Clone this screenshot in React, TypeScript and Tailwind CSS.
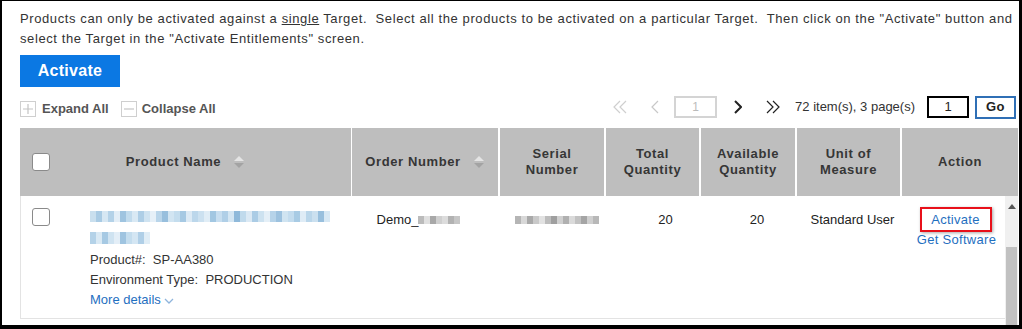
import React from "react";

const font = { fontFamily: '"Liberation Sans", Arial, sans-serif' };

const blueBlur = [
  "#c9dfee", "#a9cbe4", "#d6e7f3", "#b4d2e8", "#e3eef7", "#9fc4e0", "#c1dbed", "#d9e9f4",
  "#aecee6", "#cfe3f1", "#e6f0f8", "#b9d5ea", "#98bfdd", "#d2e5f2", "#c4ddee", "#a6c9e3",
  "#dceaf5", "#bcd7eb", "#cce1f0", "#e0edf6", "#a2c7e2", "#c7def0", "#b0cfe7", "#d4e6f3",
  "#8fb9da", "#c0daec", "#dbe9f4", "#abcce5", "#cde2f0", "#e4eff7", "#b6d3e9", "#9dc2df",
  "#d0e4f1", "#c3dcee", "#a8cbe4", "#dfecf6", "#bad6ea", "#cbe0ef", "#98bfdd", "#d7e8f4",
];
const blueBlur2 = ["#b4d2e8", "#d9e9f4", "#a6c9e3", "#cfe3f1", "#e3eef7", "#9fc4e0", "#c4ddee", "#d4e6f3", "#b0cfe7", "#e0edf6"];
const grayBlur = ["#b5b5b5", "#d8d8d8", "#a9a9a9", "#c9c9c9", "#e2e2e2", "#bdbdbd", "#9f9f9f", "#d0d0d0", "#b0b0b0", "#dadada", "#c2c2c2", "#a5a5a5", "#cfcfcf", "#b8b8b8"];
const demoBlur = ["#bbbbbb", "#e0e0e0", "#a8a8a8", "#cfcfcf", "#dcdcdc", "#b2b2b2", "#c6c6c6"];

function Blur({ colors, cell, h }: { colors: string[]; cell: number; h: number }) {
  return (
    <span className="inline-flex align-middle">
      {colors.map((c, i) => (
        <span key={i} style={{ background: c, width: cell, height: h }} className="block" />
      ))}
    </span>
  );
}

function SortIcon() {
  return (
    <svg width="12" height="14" viewBox="0 0 12 14" className="ml-3 shrink-0">
      <path d="M1 6 L6 1 L11 6 Z" fill="#e4e4e4" />
      <path d="M1 8 L6 13 L11 8 Z" fill="#a3a3a3" />
    </svg>
  );
}

function Box() {
  return <div className="w-[18px] h-[18px] rounded-[3px] border border-[#8a8a8a] bg-white shrink-0" />;
}

function DoubleChevron({ dir, color }: { dir: "l" | "r"; color: string }) {
  const d = dir === "l" ? "M7 1 L1 7 L7 13 M13 1 L7 7 L13 13" : "M1 1 L7 7 L1 13 M7 1 L13 7 L7 13";
  return (
    <svg width="14" height="14" viewBox="0 0 14 14">
      <path d={d} fill="none" stroke={color} strokeWidth="1.2" />
    </svg>
  );
}

function Chevron({ dir, color }: { dir: "l" | "r"; color: string }) {
  const d = dir === "l" ? "M7 1 L1 7 L7 13" : "M1 1 L7 7 L1 13";
  return (
    <svg width="8" height="14" viewBox="0 0 8 14">
      <path d={d} fill="none" stroke={color} strokeWidth={dir === "l" ? 1.2 : 2} />
    </svg>
  );
}

export default function App() {
  return (
    <div className="w-[1022px] h-[329px] bg-black pl-[2px] pt-[1px] pr-[3px] pb-[4px] overflow-hidden" style={font}>
      <div className="h-full bg-white pl-[18px] overflow-hidden">
        <p className="pt-[8px] text-[13px] leading-[20px] text-[#333] whitespace-nowrap tracking-[0.6px]">
          Products can only be activated against a <span className="underline">single</span> Target.&nbsp; Select all the products to be activated on a particular Target.&nbsp; Then click on the "Activate" button and
          <br />
          select the Target in the "Activate Entitlements" screen.
        </p>

        <button className="mt-[6px] w-[100px] h-[32px] bg-[#0b78e3] text-white font-bold text-[16px] tracking-[0.3px]">
          Activate
        </button>

        <div className="mt-[9px] flex items-center justify-between w-[998px] h-[22px]">
          <div className="flex items-center text-[13px] font-bold text-[#555] mt-[4px]">
            <span className="w-[16px] h-[16px] border border-[#cfcfcf] flex items-center justify-center">
              <svg width="10" height="10" viewBox="0 0 10 10">
                <path d="M5 0 V10 M0 5 H10" stroke="#c4c4c4" strokeWidth="1.2" />
              </svg>
            </span>
            <span className="ml-[6px]">Expand All</span>
            <span className="ml-[12px] w-[16px] h-[16px] border border-[#cfcfcf] flex items-center justify-center">
              <svg width="10" height="10" viewBox="0 0 10 10">
                <path d="M0 5 H10" stroke="#c4c4c4" strokeWidth="1.2" />
              </svg>
            </span>
            <span className="ml-[5px]">Collapse All</span>
          </div>

          <div className="flex items-center text-[13px] text-[#333] mr-[2px]">
            <DoubleChevron dir="l" color="#cfcfcf" />
            <span className="ml-[24px]"><Chevron dir="l" color="#c8c8c8" /></span>
            <div className="ml-[15px] w-[43px] h-[22px] border-2 border-[#d4d4d4] flex items-center justify-center text-[#bbb] text-[12px]">1</div>
            <span className="ml-[17px]"><Chevron dir="r" color="#222" /></span>
            <span className="ml-[24px]"><DoubleChevron dir="r" color="#222" /></span>
            <span className="ml-[15px] whitespace-nowrap">72 item(s), 3 page(s)</span>
            <div className="ml-[12px] w-[42px] h-[22px] border-2 border-black flex items-center justify-center text-[#222]">1</div>
            <div className="ml-[6px] w-[41px] h-[23px] border-2 border-[#2f6fb5] flex items-center justify-center font-bold text-[#222] tracking-[0.5px]">Go</div>
          </div>
        </div>

        <div className="mt-[10px] w-[998px] h-[68px] bg-[#bebebe] flex text-[13px] font-bold text-[#363636] tracking-[0.6px] leading-[16px]">
          <div className="w-[331px] flex items-center pl-[12px] pr-[30px]">
            <Box />
            <div className="flex-1 flex items-center justify-center">Product Name<SortIcon /></div>
          </div>
          <div className="w-[147px] border-l border-white flex items-center justify-center">Order Number<SortIcon /></div>
          <div className="w-[106px] border-l-2 border-white flex items-center justify-center text-center">Serial<br />Number</div>
          <div className="w-[95px] border-l-2 border-white flex items-center justify-center text-center">Total<br />Quantity</div>
          <div className="w-[96px] border-l-2 border-white flex items-center justify-center text-center">Available<br />Quantity</div>
          <div className="w-[105px] border-l-2 border-white flex items-center justify-center text-center">Unit of<br />Measure</div>
          <div className="flex-1 border-l-2 border-white flex items-center justify-center">Action</div>
        </div>

        <div className="w-[998px] flex h-[130px]">
          <div className="w-[985px] border-l border-[#e3e3e3] h-[123px] border-b flex text-[13px] text-[#222]">
            <div className="w-[330px] flex pl-[11px] pt-[12px]">
              <Box />
              <div className="ml-[40px] leading-[20px] -mt-[2px]">
                <div className="h-[20px] flex items-center"><Blur colors={blueBlur} cell={6} h={11} /></div>
                <div className="h-[24px] flex items-center"><Blur colors={blueBlur2} cell={6} h={12} /></div>
                <div className="text-[#333]">Product#:&nbsp; SP-AA380</div>
                <div className="text-[#333]">Environment Type:&nbsp; PRODUCTION</div>
                <div className="text-[#1f6fbf] flex items-center">
                  More details
                  <svg width="10" height="7" viewBox="0 0 10 7" className="ml-[3px] mt-[2px]">
                    <path d="M1 1 L5 5 L9 1" fill="none" stroke="#8fb5dc" strokeWidth="1.3" />
                  </svg>
                </div>
              </div>
            </div>
            <div className="w-[147px] pt-[11px] leading-[25px] flex justify-center pr-[12px]">
              <span className="flex items-center h-[25px]">Demo_<Blur colors={demoBlur} cell={6} h={8} /></span>
            </div>
            <div className="w-[106px] pt-[11px] h-[36px] flex items-center justify-center pl-[12px]">
              <Blur colors={grayBlur} cell={6} h={8} />
            </div>
            <div className="w-[95px] pt-[11px] leading-[25px] text-center pl-[28px]">20</div>
            <div className="w-[96px] pt-[11px] leading-[25px] text-center pl-[20px]">20</div>
            <div className="w-[105px] pt-[11px] leading-[25px] text-center pl-[10px]">Standard User</div>
            <div className="flex-1 pt-[11px] flex flex-col items-center">
              <div className="ml-[6px] w-[72px] h-[25px] border-2 border-[#e8101a] shadow-[1px_1px_3px_rgba(0,0,0,0.35)] flex items-center justify-center text-[#1f6fbf] tracking-[0.3px]">
                Activate
              </div>
              <div className="text-[#1f6fbf] leading-[16px] tracking-[0.3px] ml-[8px]">Get Software</div>
            </div>
          </div>
          <div className="w-[13px] bg-[#f0f0f0] flex flex-col items-center">
            <svg width="8" height="5" viewBox="0 0 8 5" className="mt-[8px]">
              <path d="M0 5 L4 0 L8 5 Z" fill="#555" />
            </svg>
            <div className="mt-[38px] w-[11px] flex-1 bg-[#c1c1c1]" />
          </div>
        </div>
      </div>
    </div>
  );
}
